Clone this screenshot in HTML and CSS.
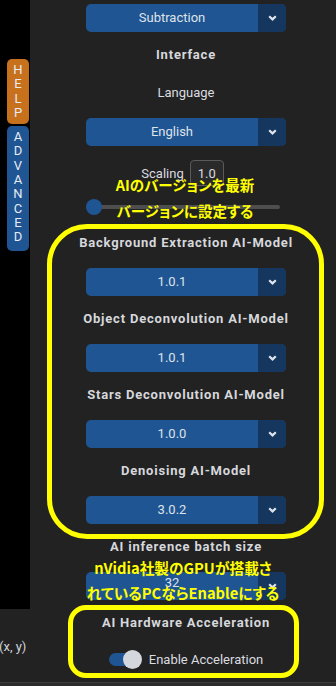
FILE: index.html
```html
<!DOCTYPE html>
<html lang="ja">
<head>
<meta charset="utf-8">
<title>Settings</title>
<link rel="stylesheet" href="styles.css">
</head>
<body>
<div class="app">
  <aside class="side">
    <div class="side-top">
      <div class="tab tab-help"><span>H</span><span>E</span><span>L</span><span>P</span></div>
      <div class="tab tab-adv"><span>A</span><span>D</span><span>V</span><span>A</span><span>N</span><span>C</span><span>E</span><span>D</span></div>
    </div>
    <div class="side-bottom"><span class="coord">(x, y)</span></div>
  </aside>
  <main class="panel">
    <div class="select first"><span class="select-value">Subtraction</span><span class="select-arrow"><svg width="9" height="6" viewBox="0 0 9 6"><path d="M1.2 1.2 L4.5 4.4 L7.8 1.2" fill="none" stroke="#dfe3ea" stroke-width="2.2"/></svg></span></div>
    <div class="label bold heading">Interface</div>
    <div class="label lang">Language</div>
    <div class="select"><span class="select-value">English</span><span class="select-arrow"><svg width="9" height="6" viewBox="0 0 9 6"><path d="M1.2 1.2 L4.5 4.4 L7.8 1.2" fill="none" stroke="#dfe3ea" stroke-width="2.2"/></svg></span></div>
    <div class="scaling"><span class="scaling-label">Scaling</span><span class="scaling-box">1.0</span></div>
    <div class="slider"><div class="track"></div><div class="thumb"></div></div>
    <div class="label bold group-first">Background Extraction AI-Model</div>
    <div class="select"><span class="select-value">1.0.1</span><span class="select-arrow"><svg width="9" height="6" viewBox="0 0 9 6"><path d="M1.2 1.2 L4.5 4.4 L7.8 1.2" fill="none" stroke="#dfe3ea" stroke-width="2.2"/></svg></span></div>
    <div class="label bold">Object Deconvolution AI-Model</div>
    <div class="select"><span class="select-value">1.0.1</span><span class="select-arrow"><svg width="9" height="6" viewBox="0 0 9 6"><path d="M1.2 1.2 L4.5 4.4 L7.8 1.2" fill="none" stroke="#dfe3ea" stroke-width="2.2"/></svg></span></div>
    <div class="label bold">Stars Deconvolution AI-Model</div>
    <div class="select"><span class="select-value">1.0.0</span><span class="select-arrow"><svg width="9" height="6" viewBox="0 0 9 6"><path d="M1.2 1.2 L4.5 4.4 L7.8 1.2" fill="none" stroke="#dfe3ea" stroke-width="2.2"/></svg></span></div>
    <div class="label bold">Denoising AI-Model</div>
    <div class="select"><span class="select-value">3.0.2</span><span class="select-arrow"><svg width="9" height="6" viewBox="0 0 9 6"><path d="M1.2 1.2 L4.5 4.4 L7.8 1.2" fill="none" stroke="#dfe3ea" stroke-width="2.2"/></svg></span></div>
    <div class="label bold">AI inference batch size</div>
    <div class="select"><span class="select-value batch">32</span><span class="select-arrow"><svg width="9" height="6" viewBox="0 0 9 6"><path d="M1.2 1.2 L4.5 4.4 L7.8 1.2" fill="none" stroke="#dfe3ea" stroke-width="2.2"/></svg></span></div>
    <div class="label bold">AI Hardware Acceleration</div>
    <div class="toggle-row"><span class="toggle"><span class="toggle-track"></span><span class="toggle-knob"></span></span><span class="toggle-text">Enable Acceleration</span></div>
  </main>
</div>
<div class="statusbar"></div>

<div class="frame frame-models"></div>
<div class="frame frame-accel"></div>
<div class="note note-version">AIのバージョンを最新<br>バージョンに設定する</div>
<div class="note note-gpu">nVidia社製のGPUが搭載さ<br>れているPCならEnableにする</div>
</body>
</html>
```

FILE: styles.css
```css
* { box-sizing: border-box; }
html, body { margin: 0; padding: 0; }
body {
  width: 336px;
  height: 686px;
  overflow: hidden;
  background: #222222;
  font-family: Roboto, "Liberation Sans", sans-serif;
  font-size: 13px;
  color: #dadce0;
  position: relative;
}
.app {
  display: flex;
  height: 682px;
}
.side {
  width: 30px;
  flex: none;
  display: flex;
  flex-direction: column;
}
.side-top {
  height: 609px;
  background: #000;
  padding: 59px 0 0 7px;
  display: flex;
  flex-direction: column;
  gap: 2px;
}
.tab {
  width: 22px;
  border-radius: 5px;
  display: flex;
  flex-direction: column;
  align-items: center;
  padding: 4px 0;
  color: #e6ecf5;
  font-size: 13px;
  line-height: 14.3px;
}
.tab-help { background: #c8711d; }
.tab-adv { background: #1f5592; padding-bottom: 6px; }
.side-bottom {
  flex: 1;
  padding-top: 30px;
  overflow: hidden;
  white-space: nowrap;
}
.coord {
  display: block;
  margin-left: -1px;
  line-height: 16px;
  color: #d0d4da;
}
.panel {
  flex: 1;
  padding-left: 6px;
  display: flex;
  flex-direction: column;
  align-items: center;
}
.select {
  width: 200px;
  height: 28px;
  margin-top: 15px;
  border-radius: 5px;
  overflow: hidden;
  display: flex;
  background: #1f5592;
}
.select.first { margin-top: 4px; }
.select-value {
  flex: 1;
  text-align: center;
  line-height: 28px;
  color: #dfe3ea;
}
.select-value.batch { line-height: 22px; }
.select-arrow {
  width: 28px;
  background: #15375f;
  display: flex;
  align-items: center;
  justify-content: center;
}
.label {
  margin-top: 13px;
  line-height: 20px;
  height: 20px;
  text-align: center;
  white-space: nowrap;
}
.bold {
  font-weight: 700;
  letter-spacing: 0.8px;
  color: #d6d8dc;
}
.lang { margin-top: 18px; }
.group-first { margin-top: 16px; }
.scaling {
  margin-top: 14px;
  height: 26px;
  display: flex;
  align-items: center;
  gap: 6px;
  margin-right: 7px;
}
.scaling-box {
  width: 34px;
  height: 26px;
  border: 1.5px solid #5a5a5a;
  border-radius: 4px;
  background: #2a2a2a;
  display: flex;
  align-items: center;
  justify-content: center;
}
.slider {
  margin-top: 11px;
  width: 200px;
  height: 20px;
  display: flex;
  align-items: center;
  position: relative;
}
.track {
  width: 194px;
  height: 4px;
  border-radius: 2px;
  background: #4e4e4e;
}
.thumb {
  position: absolute;
  left: 0;
  top: 2px;
  width: 16px;
  height: 16px;
  border-radius: 50%;
  background: #1f5592;
}
.toggle-row {
  margin-top: 16px;
  height: 20px;
  display: flex;
  align-items: center;
  gap: 7px;
}
.toggle {
  position: relative;
  width: 33px;
  height: 19px;
  display: flex;
  align-items: center;
}
.toggle-track {
  width: 28px;
  height: 13px;
  border-radius: 7px;
  background: #1f5592;
}
.toggle-knob {
  position: absolute;
  right: 0;
  top: 0;
  width: 19px;
  height: 19px;
  border-radius: 50%;
  background: #d4d8de;
}
.toggle-text { color: #dadce0; }
.statusbar {
  height: 4px;
  background: #2c2c2c;
  border-top: 1px solid #3c3c3c;
}
.frame {
  position: absolute;
  border: 5px solid #ffff00;
}
.frame-models {
  left: 47px;
  top: 224px;
  width: 277px;
  height: 315px;
  border-radius: 40px;
}
.frame-accel {
  left: 68px;
  top: 605px;
  width: 231px;
  height: 73px;
  border-radius: 18px;
}
.note {
  position: absolute;
  text-align: center;
  color: #ffff00;
  font-family: "Noto Sans CJK JP", "Noto Sans", sans-serif;
  font-weight: 700;
  font-size: 15px;
  font-feature-settings: "palt";
  white-space: nowrap;
}
.note-version {
  left: 35px;
  width: 300px;
  top: 172px;
  font-size: 14.5px;
  line-height: 26px;
}
.note-gpu {
  left: 33px;
  width: 300px;
  top: 555px;
  line-height: 25px;
  font-size: 14.7px;
}
```
